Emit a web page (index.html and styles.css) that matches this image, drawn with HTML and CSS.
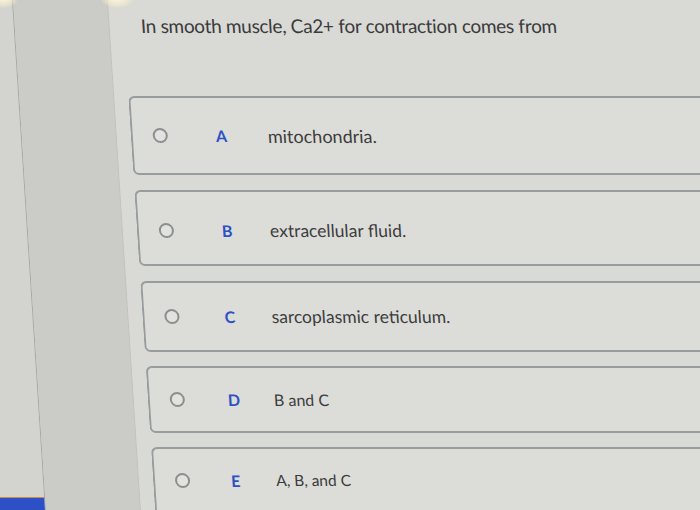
FILE: index.html
```html
<!DOCTYPE html>
<html lang="en">
<head>
<meta charset="utf-8">
<title>Question</title>
<link rel="stylesheet" href="styles.css">
</head>
<body>
<div class="screen">
  <span class="glare glare-left"></span>
  <span class="glare glare-mid"></span>
  <div class="strip">
    <div class="strip-fill"></div>
    <div class="submit"></div>
  </div>
  <div class="sidebar"></div>
  <main class="main">
    <h1 class="question">In smooth muscle, Ca2+ for contraction comes from</h1>
    <div class="options">
      <div class="opt opt-a">
        <span class="radio"></span>
        <span class="letter">A</span>
        <span class="answer">mitochondria.</span>
      </div>
      <div class="opt opt-b">
        <span class="radio"></span>
        <span class="letter">B</span>
        <span class="answer">extracellular fluid.</span>
      </div>
      <div class="opt opt-c">
        <span class="radio"></span>
        <span class="letter">C</span>
        <span class="answer">sarcoplasmic reticulum.</span>
      </div>
      <div class="opt opt-d">
        <span class="radio"></span>
        <span class="letter">D</span>
        <span class="answer">B and C</span>
      </div>
      <div class="opt opt-e">
        <span class="radio"></span>
        <span class="letter">E</span>
        <span class="answer">A, B, and C</span>
      </div>
    </div>
  </main>
</div>
</body>
</html>
```

FILE: styles.css
```css
html, body {
  margin: 0;
  padding: 0;
  width: 700px;
  height: 510px;
  overflow: hidden;
  background: #d2d2ce;
}

.screen {
  position: relative;
  display: flex;
  width: 820px;
  height: 510px;
  margin-left: -40px;
  transform: skewX(3.7deg);
  transform-origin: 0 0;
  font-family: Lato, "Liberation Sans", sans-serif;
  color: #3c3d3e;
}

.glare {
  position: absolute;
  top: -12px;
  width: 30px;
  height: 20px;
  border-radius: 50%;
  background: radial-gradient(ellipse at center, rgba(255, 250, 225, 0.95) 0%, rgba(250, 240, 205, 0.6) 45%, rgba(240, 235, 215, 0) 75%);
  z-index: 2;
}

.glare-left { left: 28px; }
.glare-mid { left: 140px; width: 34px; }

.strip {
  width: 52px;
  display: flex;
  flex-direction: column;
  background: #d3d3cf;
  border-right: 1px solid #a8a8a4;
}

.strip-fill {
  flex: 1;
}

.submit {
  height: 12px;
  background: #2d50c6;
  border-top: 1px solid #c98a4a;
}

.sidebar {
  width: 94px;
  background: #cbcbc7;
  border-right: 1px solid #c2c2be;
}

.main {
  flex: 1;
  background: #d9d9d5;
  padding-left: 14px;
  display: flex;
  flex-direction: column;
}

.question {
  margin: 14px 0 0 17px;
  font-size: 19px;
  line-height: 23px;
  letter-spacing: -0.3px;
  font-weight: 400;
  color: #3a3b3c;
}

.options {
  margin-top: 59px;
  display: flex;
  flex-direction: column;
}

.opt {
  box-sizing: border-box;
  height: var(--h);
  margin-bottom: var(--mb);
  display: flex;
  align-items: center;
  border: 2px solid #979d9e;
  border-right: none;
  border-radius: 6px 0 0 6px;
  background: #dcdcd8;
  padding-left: 20px;
  font-size: var(--fs);
}

.opt-a { --h: 79px; --mb: 15px; --gap: 48px; --lw: 52px; --fs: 18px; }
.opt-b { --h: 76px; --mb: 15px; --gap: 48px; --lw: 48px; --fs: 17.5px; padding-top: 4px; }
.opt-c { --h: 71px; --mb: 14px; --gap: 45px; --lw: 47px; --fs: 17.5px; }
.opt-d { --h: 67px; --mb: 14px; --gap: 43px; --lw: 46px; --fs: 16px; }
.opt-e { --h: 90px; --mb: 0; --gap: 41px; --lw: 45px; --fs: 15.5px; align-items: flex-start; padding-top: 22px; }

.radio {
  box-sizing: border-box;
  width: 15px;
  height: 15px;
  border: 2px solid #8c8f90;
  border-radius: 50%;
  background: #e2e2de;
  flex: none;
}

.opt-e .radio { margin-top: 2px; }

.letter {
  width: var(--lw);
  margin-left: var(--gap);
  flex: none;
  font-weight: 700;
  color: #2d51c4;
  font-size: 16px;
}

.answer {
  color: #3c3d3e;
}
```
